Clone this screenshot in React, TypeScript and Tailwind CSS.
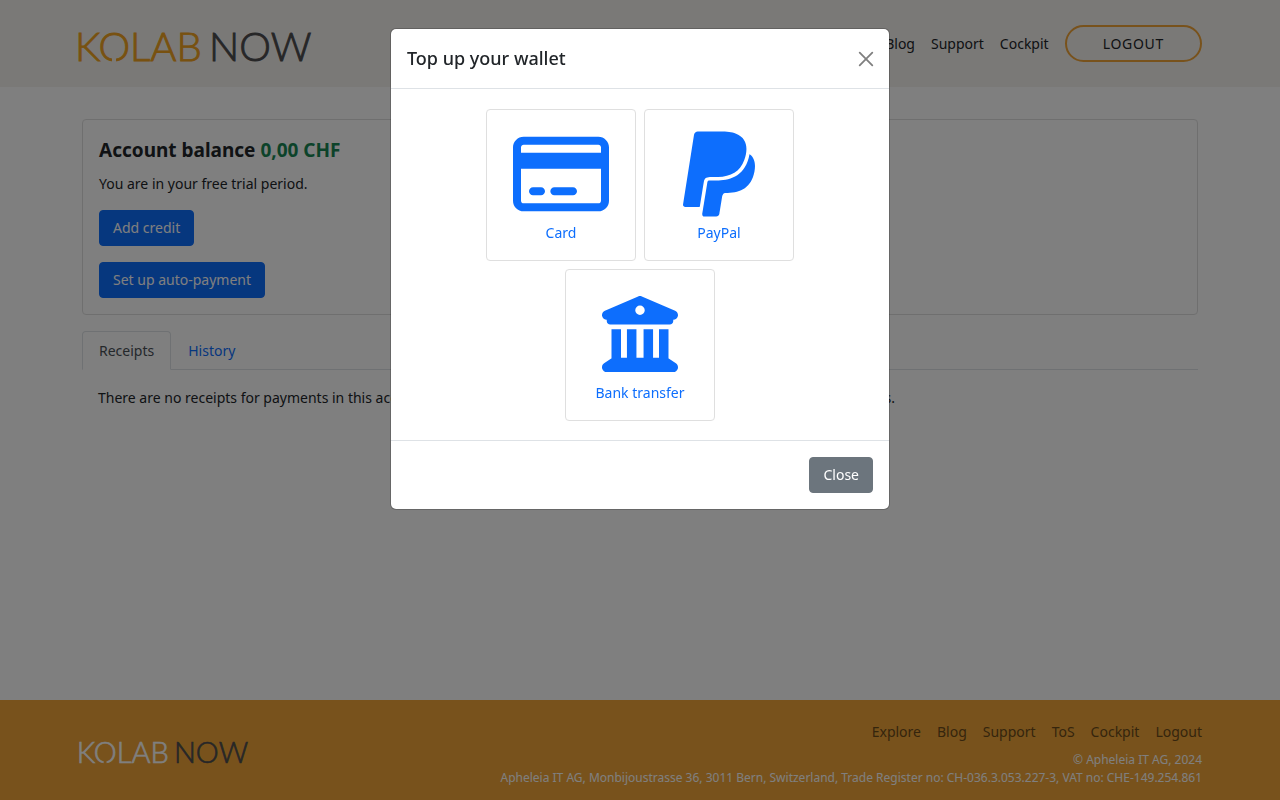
import React from 'react'
import clsx from 'clsx'
import { FaBuildingColumns, FaPaypal, FaRegCreditCard } from 'react-icons/fa6'

const headerLinks = ['Explore', 'Blog', 'Support', 'Cockpit']
const footerLinks = ['Explore', 'Blog', 'Support', 'ToS', 'Cockpit', 'Logout']

const methods = [
  { title: 'Card', icon: <FaRegCreditCard className="h-24 w-24" /> },
  { title: 'PayPal', icon: <FaPaypal className="h-24 w-18" /> },
  {
    title: 'Bank transfer',
    icon: <FaBuildingColumns className="h-[76px] w-[76px]" />,
  },
]

const tabs = [
  {
    title: 'Receipts',
    text: 'There are no receipts for payments in this account. Please, note that you may download all receipts after the month ends.',
  },
  { title: 'History', text: 'There are no transactions for this account.' },
]

type LogoProps = {
  className?: string
  nameClass: string
  gapClass: string
}

function Logo({ className, nameClass, gapClass }: LogoProps) {
  return (
    <svg
      viewBox="0 0 240 40"
      role="img"
      aria-label="Kolab Now"
      strokeWidth="0.9"
      className={clsx(
        'shrink-0 overflow-visible font-[Lato,sans-serif] text-[40px] font-light',
        className
      )}
    >
      <text x="-3" y="37" className={nameClass}>
        KOLAB
      </text>
      <path d="M36 33v6" strokeWidth="4" className={gapClass} />
      <text x="131" y="37" className="fill-[#4d4d4f] stroke-[#4d4d4f]">
        NOW
      </text>
    </svg>
  )
}

function Header() {
  return (
    <header className="bg-[#f5f2ef]">
      <div className="mx-auto flex h-[87px] max-w-[1140px] items-center justify-between px-2">
        <a href="#home">
          <Logo
            className="h-10 w-60"
            nameClass="fill-[#f1a320] stroke-[#f1a320]"
            gapClass="stroke-[#f5f2ef]"
          />
        </a>
        <nav className="flex items-center gap-4">
          {headerLinks.map((link) => (
            <a key={link} href={`#${link.toLowerCase()}`}>
              {link}
            </a>
          ))}
          <a
            href="#logout"
            className="rounded-full border-2 border-[#f1a539] px-9 py-[5px] leading-[23px] tracking-wider"
          >
            LOGOUT
          </a>
        </nav>
      </div>
    </header>
  )
}

function Wallet({ onTopUp }: { onTopUp: () => void }) {
  const [activeIndex, setActiveIndex] = React.useState<number>(0)
  const button =
    'rounded border border-[#0d6efd] bg-[#0d6efd] px-[13px] py-1.5 text-white'

  return (
    <main className="mx-auto w-full max-w-[1140px] grow px-3 pt-8">
      <section className="rounded border border-[#dfdfdf] p-4">
        <h1 className="mb-2 text-[19px] leading-[29px] font-bold">
          Account balance <span className="text-[#198754]">0,00 CHF</span>
        </h1>
        <p className="mb-[15px]">You are in your free trial period.</p>
        <div className="flex flex-col items-start gap-4">
          <button type="button" className={button} onClick={onTopUp}>
            Add credit
          </button>
          <button type="button" className={button}>
            Set up auto-payment
          </button>
        </div>
      </section>
      <div role="tablist" className="mt-4 flex border-b border-[#dee2e6]">
        {tabs.map((tab, index) => (
          <button
            key={tab.title}
            type="button"
            role="tab"
            aria-selected={index === activeIndex}
            onClick={() => setActiveIndex(index)}
            className={clsx(
              '-mb-px rounded-t border px-4 py-2 leading-[21px]',
              index === activeIndex
                ? 'border-[#dee2e6] border-b-white bg-white text-[#495057]'
                : 'border-transparent text-[#0d6efd]'
            )}
          >
            {tab.title}
          </button>
        ))}
      </div>
      <p role="tabpanel" className="px-4 py-[17px]">
        {tabs[activeIndex].text}
      </p>
    </main>
  )
}

function Footer() {
  return (
    <footer className="bg-[#f1a539]">
      <div className="mx-auto flex min-h-[100px] max-w-[1140px] items-center justify-between px-2">
        <Logo
          className="h-[29px] w-44"
          nameClass="fill-white stroke-white"
          gapClass="stroke-[#f1a539]"
        />
        <div className="flex flex-col items-end pt-2">
          <nav className="mb-2 flex gap-4 text-[#6b4a1a]">
            {footerLinks.map((link) => (
              <a key={link} href={`#${link.toLowerCase()}`}>
                {link}
              </a>
            ))}
          </nav>
          <p className="text-right text-xs leading-[18px] text-white">
            © Apheleia IT AG, 2024
            <br />
            Apheleia IT AG, Monbijoustrasse 36, 3011 Bern, Switzerland, Trade
            Register no: CH-036.3.053.227-3, VAT no: CHE-149.254.861
          </p>
        </div>
      </div>
    </footer>
  )
}

function TopUpDialog({ onClose }: { onClose: () => void }) {
  return (
    <div className="fixed inset-0 overflow-y-auto bg-black/50 px-2 py-7">
      <div
        role="dialog"
        aria-modal="true"
        aria-labelledby="top-up-title"
        className="mx-auto max-w-[500px] rounded-md border border-black/20 bg-white bg-clip-padding"
      >
        <div className="flex items-center justify-between border-b border-[#dee2e6] p-4">
          <h2 id="top-up-title" className="text-lg leading-[27px] font-medium">
            Top up your wallet
          </h2>
          <button
            type="button"
            aria-label="Close dialog"
            onClick={onClose}
            className="text-black/50"
          >
            <svg viewBox="0 0 14 14" className="h-3.5 w-3.5 overflow-visible">
              <path
                d="M.7 .7l12.6 12.6M13.3 .7L.7 13.3"
                fill="none"
                stroke="currentColor"
                strokeWidth="1.8"
                strokeLinecap="round"
              />
            </svg>
          </button>
        </div>
        <div className="flex flex-wrap justify-center gap-2 px-20 pt-5 pb-[19px]">
          {methods.map((method) => (
            <button
              key={method.title}
              type="button"
              className="w-[150px] rounded border border-[#dfdfdf] py-4 text-[#0d6efd]"
            >
              <span className="flex h-24 items-center justify-center">
                {method.icon}
              </span>
              {method.title}
            </button>
          ))}
        </div>
        <div className="flex justify-end border-t border-[#dee2e6] p-4">
          <button
            type="button"
            onClick={onClose}
            className="rounded border border-[#6c757d] bg-[#6c757d] px-[13px] py-1.5 text-white"
          >
            Close
          </button>
        </div>
      </div>
    </div>
  )
}

export default function App() {
  const [open, setOpen] = React.useState<boolean>(true)

  return (
    <div className="flex min-h-screen flex-col bg-white font-['Noto_Sans',sans-serif] text-[14px] leading-[22px] text-[#212529]">
      <Header />
      <Wallet onTopUp={() => setOpen(true)} />
      <Footer />
      {open && <TopUpDialog onClose={() => setOpen(false)} />}
    </div>
  )
}
